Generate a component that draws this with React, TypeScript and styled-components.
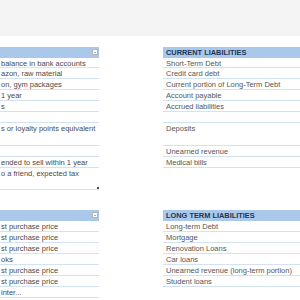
import React from "react";
import styled, { createGlobalStyle } from "styled-components";

const GlobalStyle = createGlobalStyle`
    body {
        margin: 0;
        background: #ffffff;
        font-family: "Liberation Sans", Arial, sans-serif;
        overflow: hidden;
    }
`;

const Page = styled.div`
    width: 300px;
    height: 300px;
    overflow: hidden;
    background: #ffffff;
`;

const TopBand = styled.div`
    height: 36px;
    background: #f4f4f4;
`;

const Sheet = styled.div`
    display: flex;
    padding-top: 11px;
`;

const Column = styled.div<{ $width: number; $offset: number }>`
    display: flex;
    flex-direction: column;
    width: ${(p) => p.$width}px;
    margin-left: ${(p) => p.$offset}px;
    flex-shrink: 0;
`;

const Gap = styled.div<{ $h: number }>`
    height: ${(p) => p.$h}px;
`;

const HeaderRow = styled.div<{ $pad: number }>`
    position: relative;
    box-sizing: border-box;
    height: 11px;
    padding-left: ${(p) => p.$pad}px;
    background: #a9c8ea;
    color: #1f3553;
    font-size: 7.4px;
    font-weight: bold;
    line-height: 11px;
    white-space: nowrap;
`;

const DropButton = styled.div`
    position: absolute;
    right: 1px;
    top: 2px;
    width: 6px;
    height: 6px;
    box-sizing: border-box;
    background: #ffffff;
    border: 1px solid #b5b5b5;
    display: flex;
    align-items: center;
    justify-content: center;

    &::after {
        content: "";
        border-left: 1.5px solid transparent;
        border-right: 1.5px solid transparent;
        border-top: 1.5px solid #555;
    }
`;

const Row = styled.div<{ $h: number; $pad: number; $color: string }>`
    position: relative;
    box-sizing: border-box;
    height: ${(p) => p.$h}px;
    padding-left: ${(p) => p.$pad}px;
    border-bottom: 1px solid #d2e2f3;
    color: ${(p) => p.$color};
    font-size: 7.5px;
    line-height: 11px;
    white-space: nowrap;
    overflow: hidden;
`;

const ResizeMark = styled.div`
    position: absolute;
    right: 0;
    bottom: 0;
    width: 2px;
    height: 2px;
    background: #3a4a5a;
`;

type Cell = { text: string; h: number; handle?: boolean };

interface TableProps {
    title: string;
    rows: Cell[];
    pad: number;
    color: string;
    dropdown?: boolean;
}

const Table: React.FC<TableProps> = ({ title, rows, pad, color, dropdown }) => (
    <div>
        <HeaderRow $pad={pad}>
            {title}
            {dropdown && <DropButton />}
        </HeaderRow>
        {rows.map((r, i) => (
            <Row key={i} $h={r.h} $pad={pad} $color={color}>
                {r.text}
                {r.handle && <ResizeMark />}
            </Row>
        ))}
    </div>
);

const currentAssets: Cell[] = [
    { text: "balance in bank accounts", h: 10 },
    { text: "azon, raw material", h: 11 },
    { text: "on, gym packages", h: 11 },
    { text: "1 year", h: 11 },
    { text: "s", h: 11 },
    { text: "", h: 11 },
    { text: "s or loyalty points equivalent", h: 23 },
    { text: "", h: 11 },
    { text: "ended to sell within 1 year", h: 11 },
    { text: "o a friend, expected tax", h: 22, handle: true },
];

const fixedAssets: Cell[] = [
    { text: "st purchase price", h: 11 },
    { text: "st purchase price", h: 11 },
    { text: "st purchase price", h: 11 },
    { text: "oks", h: 11 },
    { text: "st purchase price", h: 11 },
    { text: "st purchase price", h: 11 },
    { text: "inter...", h: 11 },
];

const currentLiabilities: Cell[] = [
    { text: "Short-Term Debt", h: 10 },
    { text: "Credit card debt", h: 11 },
    { text: "Current portion of Long-Term Debt", h: 11 },
    { text: "Account payable", h: 11 },
    { text: "Accrued liabilities", h: 11 },
    { text: "", h: 11 },
    { text: "Deposits", h: 23 },
    { text: "Unearned revenue", h: 11 },
    { text: "Medical bills", h: 11 },
];

const longTermLiabilities: Cell[] = [
    { text: "Long-term Debt", h: 11 },
    { text: "Mortgage", h: 11 },
    { text: "Renovation Loans", h: 11 },
    { text: "Car loans", h: 11 },
    { text: "Unearned revenue (long-term portion)", h: 11 },
    { text: "Student loans", h: 11 },
];

const App: React.FC = () => {
    return (
        <Page>
            <GlobalStyle />
            <TopBand />
            <Sheet>
                <Column $width={99} $offset={0}>
                    <Table title="" rows={currentAssets} pad={1} color="#4a4a4a" dropdown />
                    <Gap $h={20} />
                    <Table title="" rows={fixedAssets} pad={1} color="#4a4a4a" dropdown />
                </Column>
                <Column $width={137} $offset={64}>
                    <Table title="CURRENT LIABILITIES" rows={currentLiabilities} pad={3} color="#555555" />
                    <Gap $h={42} />
                    <Table title="LONG TERM LIABILITIES" rows={longTermLiabilities} pad={3} color="#555555" />
                </Column>
            </Sheet>
        </Page>
    );
};

export default App;
